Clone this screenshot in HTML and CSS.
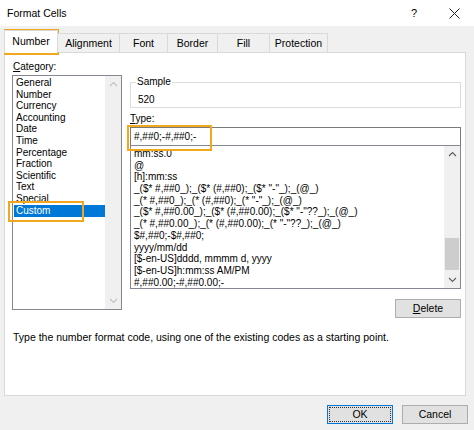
FILE: index.html
```html
<!DOCTYPE html>
<html>
<head>
<meta charset="utf-8">
<link rel="stylesheet" href="styles.css">
</head>
<body>
<div class="dialog">
  <div class="titlebar">
    <span class="title">Format Cells</span>
    <span class="tb-btns">
      <span class="help">?</span>
      <svg class="close" width="11" height="11" viewBox="0 0 11 11"><path d="M0.5 0.5 L10.5 10.5 M10.5 0.5 L0.5 10.5" stroke="#222" stroke-width="1"/></svg>
    </span>
  </div>
  <div class="tabs">
    <div class="tab active w-number">Number</div>
    <div class="tab w-align">Alignment</div>
    <div class="tab w-font">Font</div>
    <div class="tab w-border">Border</div>
    <div class="tab w-fill">Fill</div>
    <div class="tab w-prot">Protection</div>
  </div>
  <div class="panel">
    <div class="cols">
      <div class="leftcol">
        <div class="label"><u>C</u>ategory:</div>
        <div class="catlist">
          <div class="items">
            <div class="item">General</div>
            <div class="item">Number</div>
            <div class="item">Currency</div>
            <div class="item">Accounting</div>
            <div class="item">Date</div>
            <div class="item">Time</div>
            <div class="item">Percentage</div>
            <div class="item">Fraction</div>
            <div class="item">Scientific</div>
            <div class="item">Text</div>
            <div class="item">Special</div>
            <div class="item sel">Custom</div>
          </div>
          <div class="vscroll">
            <svg class="arrow" width="9" height="6" viewBox="0 0 9 6"><path d="M1 5 L4.5 1.5 L8 5" fill="none" stroke="#c2c2c2" stroke-width="1.2"/></svg>
            <div class="track"></div>
            <svg class="arrow" width="9" height="6" viewBox="0 0 9 6"><path d="M1 1 L4.5 4.5 L8 1" fill="none" stroke="#c2c2c2" stroke-width="1.2"/></svg>
          </div>
        </div>
      </div>
      <div class="rightcol">
        <fieldset class="sample">
          <legend>Sample</legend>
          <div class="sample-val">520</div>
        </fieldset>
        <div class="label type-label"><u>T</u>ype:</div>
        <div class="typebox">#,##0;-#,##0;-</div>
        <div class="fmtlist">
          <div class="fitems">
            <div class="fitem">mm:ss.0</div>
            <div class="fitem">@</div>
            <div class="fitem">[h]:mm:ss</div>
            <div class="fitem">_($* #,##0_);_($* (#,##0);_($* "-"_);_(@_)</div>
            <div class="fitem">_(* #,##0_);_(* (#,##0);_(* "-"_);_(@_)</div>
            <div class="fitem">_($* #,##0.00_);_($* (#,##0.00);_($* "-"??_);_(@_)</div>
            <div class="fitem">_(* #,##0.00_);_(* (#,##0.00);_(* "-"??_);_(@_)</div>
            <div class="fitem">$#,##0;-$#,##0;</div>
            <div class="fitem">yyyy/mm/dd</div>
            <div class="fitem">[$-en-US]dddd, mmmm d, yyyy</div>
            <div class="fitem">[$-en-US]h:mm:ss AM/PM</div>
            <div class="fitem">#,##0.00;-#,##0.00;-</div>
          </div>
          <div class="vscroll">
            <svg class="arrow" width="9" height="6" viewBox="0 0 9 6"><path d="M1 5 L4.5 1.5 L8 5" fill="none" stroke="#606060" stroke-width="1.2"/></svg>
            <div class="track"><div class="thumb"></div></div>
            <svg class="arrow" width="9" height="6" viewBox="0 0 9 6"><path d="M1 1 L4.5 4.5 L8 1" fill="none" stroke="#606060" stroke-width="1.2"/></svg>
          </div>
        </div>
        <div class="delrow"><button class="btn"><u>D</u>elete</button></div>
      </div>
    </div>
    <div class="desc">Type the number format code, using one of the existing codes as a starting point.</div>
  </div>
  <div class="footer">
    <button class="btn ok"><span class="focus">OK</span></button>
    <button class="btn cancel">Cancel</button>
  </div>
  <div class="mark mark-tab"></div>
  <div class="mark mark-custom"></div>
  <div class="mark mark-type"></div>
</div>
</body>
</html>
```
FILE: styles.css
```css
* { box-sizing: border-box; }
html, body { margin: 0; padding: 0; }
body {
  width: 474px;
  height: 430px;
  overflow: hidden;
  font-family: "Liberation Sans", Arial, sans-serif;
  font-size: 10px;
  color: #000;
  background: #f0f0f0;
}
.dialog { position: relative; width: 474px; height: 430px; }

/* title bar */
.titlebar {
  height: 26px;
  background: #fff;
  display: flex;
  align-items: center;
  justify-content: space-between;
  padding: 0 14px 0 7px;
}
.title { font-size: 10.5px; }
.tb-btns { display: flex; align-items: center; gap: 32px; }
.help { font-size: 11px; }
.close { display: block; }

/* tabs */
.tabs {
  display: flex;
  align-items: flex-end;
  height: 26px;
  padding-left: 4px;
  position: relative;
  z-index: 2;
}
.tab {
  height: 19px;
  border: 1px solid #d9d9d9;
  border-bottom: none;
  border-left: none;
  background: #f0f0f0;
  display: flex;
  align-items: center;
  justify-content: center;
  font-size: 10.5px;
  line-height: 1;
}
.tab.active {
  height: 23px;
  background: #fff;
  border-left: 1px solid #d9d9d9;
  margin-bottom: -1px;
  padding-bottom: 2px;
}
.w-number { width: 54px; }
.w-align { width: 62px; }
.w-font { width: 48px; }
.w-border { width: 50px; }
.w-fill { width: 52px; }
.w-prot { width: 58px; }

/* panel */
.panel {
  margin: 0 8px 0 4px;
  height: 344px;
  background: #fff;
  border: 1px solid #d9d9d9;
  padding: 8px 0 0 7px;
  display: flex;
  flex-direction: column;
}
.cols { display: flex; gap: 8px; }
.leftcol { width: 110px; display: flex; flex-direction: column; }
.label { height: 12px; line-height: 12px; padding-left: 1px; }
.catlist {
  margin-top: 2px;
  height: 235px;
  border: 1px solid #828790;
  display: flex;
}
.items { flex: 1; padding: 1px 0 0 1px; }
.item { height: 11.6px; line-height: 11.6px; padding-left: 2px; white-space: nowrap; }
.item.sel { background: #0078d7; color: #fff; height: 12px; line-height: 12px; }

.vscroll {
  width: 16px;
  background: #f0f0f0;
  display: flex;
  flex-direction: column;
  align-items: center;
}
.vscroll .arrow { margin: 5px 0; flex: none; }
.vscroll .track { flex: 1; width: 100%; position: relative; }
.thumb { position: absolute; left: 1px; right: 1px; bottom: 2px; height: 32px; background: #cdcdcd; }

.rightcol { flex: 1; padding-right: 4px; display: flex; flex-direction: column; }
.sample {
  margin: 15px 0 0 0;
  padding: 0 0 1px 7px;
  border: 1px solid #dcdcdc;
  min-width: 0;
}
.sample legend { padding: 0 1px; margin-left: -2px; line-height: 12px; height: 12px; }
.sample-val { padding-top: 6px; line-height: 12px; }
.type-label { margin-top: 5px; padding-left: 0; }
.typebox {
  margin-top: 2px;
  height: 18px;
  border: 1px solid #7a7a7a;
  border-bottom: none;
  padding: 0 3px;
  line-height: 18px;
}
.fmtlist {
  height: 144px;
  border: 1px solid #828790;
  display: flex;
}
.fitems { flex: 1; padding: 2px 0 0 3px; overflow: hidden; }
.fitem {
  height: 11.7px;
  line-height: 11.7px;
  white-space: nowrap;
}
.delrow { display: flex; justify-content: flex-end; margin-top: 10px; }

.btn {
  font-family: "Liberation Sans", Arial, sans-serif;
  font-size: 10.5px;
  width: 66px;
  height: 19px;
  padding: 0;
  background: #e1e1e1;
  border: 1px solid #adadad;
  color: #000;
  line-height: 1;
}
.desc { margin-top: 13px; padding-left: 1px; line-height: 12px; font-size: 10.5px; }

/* footer */
.footer {
  display: flex;
  justify-content: flex-end;
  gap: 9px;
  padding: 9px 6px 0 0;
}
.btn.ok { border: 1px solid #0078d7; padding: 1px; }
.ok .focus {
  display: flex;
  align-items: center;
  justify-content: center;
  height: 100%;
  border: 1px dotted #333;
}

/* orange annotation marks */
.mark { position: absolute; border: 2.5px solid #f2a81d; }
.mark-tab { left: 4px; top: 29px; width: 55px; height: 26px; }
.mark-custom { left: 8px; top: 201px; width: 76px; height: 21px; }
.mark-type { left: 127px; top: 125px; width: 85px; height: 26px; }
```
